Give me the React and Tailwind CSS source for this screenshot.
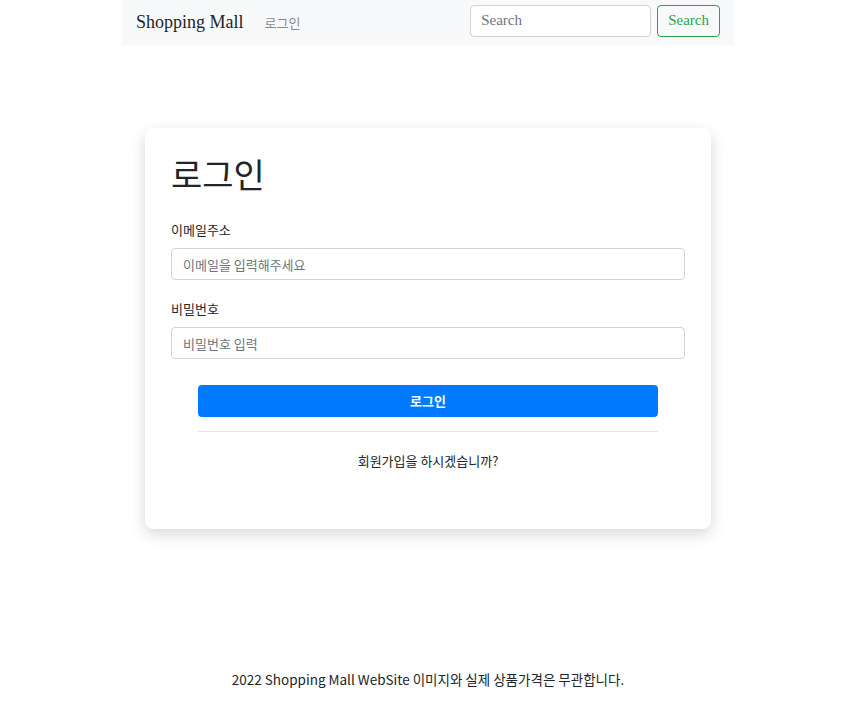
import React from "react";

const sans = { fontFamily: '"Noto Sans CJK KR", "Noto Sans", sans-serif' };

const Navbar = () => {
  return (
    <nav className="mx-auto flex h-[45px] w-[612px] items-center justify-between bg-[#f8f9fa] pl-[14px] pr-[14px]">
      <div className="flex items-center">
        <span className="font-['Liberation_Serif',serif] text-[18px] text-[#212529]">
          Shopping Mall
        </span>
        <a className="ml-[21px] font-['Noto_Sans_CJK_KR',sans-serif] text-[13px] text-[#8a8a8a]">
          로그인
        </a>
      </div>
      <div className="-mt-[4px] flex items-center">
        <input
          placeholder="Search"
          className="h-[32px] w-[181px] rounded border border-[#ced4da] bg-white px-[10px] font-['Liberation_Serif',serif] text-[15px] placeholder:text-[#6c757d] outline-none"
        />
        <button className="ml-[6px] h-[32px] rounded border border-[#28a745] px-[10px] font-['Liberation_Serif',serif] text-[15px] text-[#28a745]">
          Search
        </button>
      </div>
    </nav>
  );
};

const LoginCard = () => {
  return (
    <div className="mx-auto mt-[83px] w-[566px] rounded-lg bg-white px-[26px] pb-[58px] pt-[24px] shadow-[0_5px_15px_rgba(0,0,0,0.16)]">
      <h1 className="font-['Noto_Sans_CJK_KR',sans-serif] text-[34px] font-normal leading-[44px] text-[#212529]">
        로그인
      </h1>
      <div className="mt-[24px]">
        <label className="block text-[13px] leading-[20px] text-[#212529]" style={sans}>
          이메일주소
        </label>
        <input
          placeholder="이메일을 입력해주세요"
          className="mt-[8px] h-[32px] w-full rounded border border-[#ced4da] px-[11px] text-[13px] placeholder:text-[#6c757d] outline-none"
          style={sans}
        />
      </div>
      <div className="mt-[19px]">
        <label className="block text-[13px] leading-[20px] text-[#212529]" style={sans}>
          비밀번호
        </label>
        <input
          type="password"
          placeholder="비밀번호 입력"
          className="mt-[8px] h-[32px] w-full rounded border border-[#ced4da] px-[11px] text-[13px] placeholder:text-[#6c757d] outline-none"
          style={sans}
        />
      </div>
      <div className="mx-[27px] mt-[26px]">
        <button
          className="h-[32px] w-full rounded bg-[#007bff] text-[13px] font-bold text-white"
          style={sans}
        >
          로그인
        </button>
        <hr className="mt-[14px] border-t border-[#e2e2e2]" />
        <p className="mt-[19px] text-center text-[13px] leading-[20px] text-[#212529]" style={sans}>
          회원가입을 하시겠습니까?
        </p>
      </div>
    </div>
  );
};

export default function App() {
  return (
    <div className="flex min-h-[701px] flex-col bg-white">
      <Navbar />
      <LoginCard />
      <footer className="mt-auto pb-[12px] text-center text-[13.5px] text-[#212529]" style={sans}>
        2022 Shopping Mall WebSite 이미지와 실제 상품가격은 무관합니다.
      </footer>
    </div>
  );
}
